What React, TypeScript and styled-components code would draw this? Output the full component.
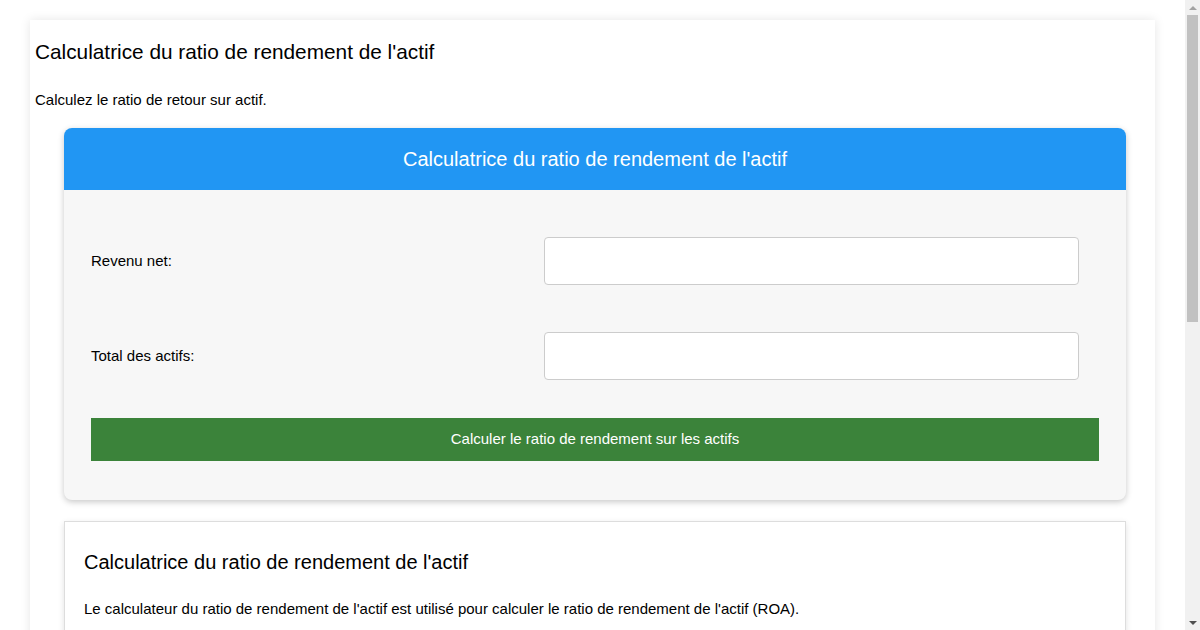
import React from "react";
import styled, { createGlobalStyle } from "styled-components";

const Global = createGlobalStyle`
  html, body { margin: 0; padding: 0; background: #ffffff; }
  body { font-family: "Liberation Sans", Arial, sans-serif; color: #000; margin-right: 15px; }
  * { box-sizing: border-box; }
`;

const ScrollTrack = styled.div`
  position: fixed;
  top: 0;
  right: 0;
  width: 15px;
  height: 100vh;
  background: #f1f1f1;
  display: flex;
  flex-direction: column;
  align-items: center;
`;

const ScrollArrow = styled.div<{ $down?: boolean; $color: string }>`
  flex: 0 0 15px;
  width: 15px;
  display: flex;
  align-items: center;
  justify-content: center;
  &::before {
    content: "";
    width: 0;
    height: 0;
    border-left: 4px solid transparent;
    border-right: 4px solid transparent;
    ${(p) => (p.$down ? `border-top: 4px solid ${p.$color};` : `border-bottom: 4px solid ${p.$color};`)}
  }
`;

const ScrollThumb = styled.div`
  width: 11px;
  height: 307px;
  background: #c1c1c1;
`;

const ScrollSpacer = styled.div`
  flex: 1;
`;

const Page = styled.div`
  margin: 20px 30px;
  padding: 0 0 20px 5px;
  background: #ffffff;
  box-shadow: 0 0 10px rgba(0, 0, 0, 0.1);
  overflow: hidden;
`;

const PageTitle = styled.h1`
  font-size: 20.8px;
  font-weight: normal;
  line-height: 24px;
  margin: 20px 0 27px;
`;

const Intro = styled.p`
  font-size: 15px;
  line-height: 17px;
  margin: 0 0 20px;
`;

const Card = styled.section`
  margin: 0 29px;
  border-radius: 8px;
  background: #f7f7f7;
  box-shadow: 0 2px 6px rgba(0, 0, 0, 0.22);
  overflow: hidden;
`;

const CardHeader = styled.h2`
  margin: 0;
  height: 62px;
  padding: 20px;
  background: #2196f3;
  color: #ffffff;
  font-size: 20px;
  font-weight: normal;
  line-height: 22px;
  text-align: center;
`;

const CardBody = styled.div`
  padding: 47px 27px 39px;
  display: flex;
  flex-direction: column;
`;

const Row = styled.div`
  display: flex;
  align-items: center;
  margin-bottom: 47px;
  &:last-of-type { margin-bottom: 38px; }
`;

const Label = styled.label`
  flex: 0 0 45%;
  font-size: 15px;
  line-height: 17px;
  padding-bottom: 2px;
`;

const Input = styled.input`
  flex: 1;
  margin-right: 20px;
  margin-left: -1px;
  height: 48px;
  border: 1px solid #cccccc;
  border-radius: 4px;
  background: #ffffff;
  padding: 0 10px;
  font-family: inherit;
  font-size: 15px;
  outline: none;
`;

const Button = styled.button`
  width: 100%;
  height: 43px;
  border: none;
  padding: 0 0 2px;
  background: #3b833a;
  color: #ffffff;
  font-family: inherit;
  font-size: 15px;
  cursor: pointer;
`;

const InfoCard = styled.section`
  margin: 21px 29px 0;
  padding: 20px 19px;
  background: #ffffff;
  border: 1px solid #dddddd;
  box-shadow: 0 2px 6px rgba(0, 0, 0, 0.12);
`;

const InfoTitle = styled.h2`
  font-size: 20px;
  font-weight: normal;
  line-height: 22px;
  margin: 9px 0 27px;
`;

const InfoText = styled.p`
  font-size: 15px;
  line-height: 18px;
  margin: 0 0 20px;
`;

const SubTitle = styled.h3`
  font-size: 17px;
  font-weight: normal;
  margin: 30px 0 16px;
`;

const Formula = styled.div`
  font-size: 15px;
  padding: 14px 18px;
  background: #f7f7f7;
  border-left: 4px solid #2196f3;
  margin: 0 0 20px;
`;

export default function App() {
  return (
    <>
      <Global />
      <Page>
        <PageTitle>Calculatrice du ratio de rendement de l'actif</PageTitle>
        <Intro>Calculez le ratio de retour sur actif.</Intro>
        <Card>
          <CardHeader>Calculatrice du ratio de rendement de l'actif</CardHeader>
          <CardBody>
            <Row>
              <Label htmlFor="net">Revenu net:</Label>
              <Input id="net" type="text" />
            </Row>
            <Row>
              <Label htmlFor="assets">Total des actifs:</Label>
              <Input id="assets" type="text" />
            </Row>
            <Button type="button">Calculer le ratio de rendement sur les actifs</Button>
          </CardBody>
        </Card>
        <InfoCard>
          <InfoTitle>Calculatrice du ratio de rendement de l'actif</InfoTitle>
          <InfoText>
            Le calculateur du ratio de rendement de l'actif est utilisé pour calculer le ratio de rendement de l'actif (ROA).
          </InfoText>
          <SubTitle>Ratio de rendement de l'actif</SubTitle>
          <InfoText>
            Le ratio de rendement de l'actif mesure la rentabilité d'une entreprise par rapport à l'ensemble de ses actifs.
            Il indique l'efficacité avec laquelle la direction utilise les actifs pour générer des bénéfices.
          </InfoText>
          <SubTitle>Formule</SubTitle>
          <Formula>Ratio de rendement de l'actif = Revenu net / Total des actifs</Formula>
          <InfoText>
            Un ratio plus élevé signifie que l'entreprise tire davantage de bénéfices de ses actifs. Il est utile de
            comparer ce ratio à celui d'entreprises du même secteur.
          </InfoText>
          <SubTitle>Exemple</SubTitle>
          <InfoText>
            Une entreprise dont le revenu net est de 50 000 et dont le total des actifs est de 500 000 a un ratio de
            rendement de l'actif de 0,1, soit 10 %.
          </InfoText>
        </InfoCard>
      </Page>
      <ScrollTrack aria-hidden="true">
        <ScrollArrow $color="#a3a3a3" />
        <ScrollThumb />
        <ScrollSpacer />
        <ScrollArrow $down $color="#505050" />
      </ScrollTrack>
    </>
  );
}
